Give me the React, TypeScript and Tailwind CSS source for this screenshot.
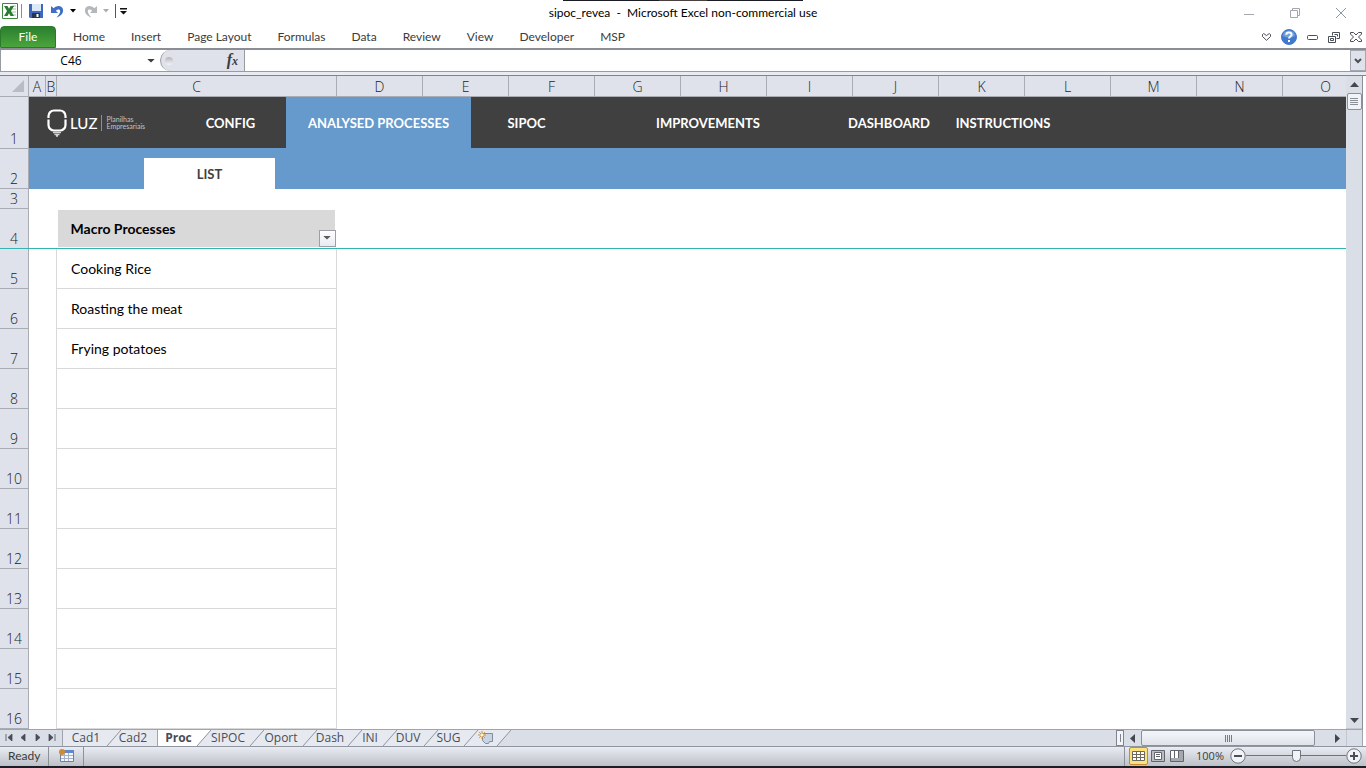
import React from 'react'
import clsx from 'clsx'

type Row = {
  readonly label: number
  readonly heightClassName: string
}

type SheetTab = {
  readonly name: string
  readonly widthClassName: string
}

type NavItem = {
  readonly label: string
  readonly widthClassName: string
}

const ribbonTabs: ReadonlyArray<string> = [
  'Home',
  'Insert',
  'Page Layout',
  'Formulas',
  'Data',
  'Review',
  'View',
  'Developer',
  'MSP',
]

const columns: ReadonlyArray<string> = 'DEFGHIJKLMNO'.split('')

const rows: ReadonlyArray<Row> = [
  { label: 1, heightClassName: 'h-[52px]' },
  { label: 2, heightClassName: 'h-10' },
  { label: 3, heightClassName: 'h-5' },
  ...[4, 5, 6, 7, 8, 9, 10, 11, 12, 13, 14, 15, 16].map(label => ({
    label,
    heightClassName: 'h-10',
  })),
]

const navItems: ReadonlyArray<NavItem> = [
  { label: 'CONFIG', widthClassName: 'w-[111px]' },
  { label: 'ANALYSED PROCESSES', widthClassName: 'w-[185px]' },
  { label: 'SIPOC', widthClassName: 'w-[111px]' },
  { label: 'IMPROVEMENTS', widthClassName: 'w-[252px]' },
  { label: 'DASHBOARD', widthClassName: 'w-[110px]' },
  { label: 'INSTRUCTIONS', widthClassName: 'w-[118px]' },
]

const processes: ReadonlyArray<string> = [
  'Cooking Rice',
  'Roasting the meat',
  'Frying potatoes',
  ...Array.from({ length: 9 }, () => ''),
]

const sheetTabs: ReadonlyArray<SheetTab> = [
  { name: 'Cad1', widthClassName: 'w-[51px]' },
  { name: 'Cad2', widthClassName: 'w-[43px]' },
  { name: 'Proc', widthClassName: 'w-[47px]' },
  { name: 'SIPOC', widthClassName: 'w-[53px]' },
  { name: 'Oport', widthClassName: 'w-[53px]' },
  { name: 'Dash', widthClassName: 'w-[45px]' },
  { name: 'INI', widthClassName: 'w-[35px]' },
  { name: 'DUV', widthClassName: 'w-[41px]' },
  { name: 'SUG', widthClassName: 'w-[40px]' },
]

const App = (): React.JSX.Element => (
  <div className="flex h-screen flex-col overflow-hidden bg-white font-['Open_Sans',sans-serif] text-xs text-[#3b3b3b]">
    <TitleBar />
    <Ribbon />
    <FormulaBar />
    <Sheet />
    <SheetTabs />
    <StatusBar />
  </div>
)

const TitleBar = (): React.JSX.Element => (
  <header className="grid h-[26px] shrink-0 grid-cols-[1fr_auto_1fr]">
    <div className="flex items-center pb-1 pl-0.5">
      <ExcelIcon />
      <span className="ml-[3px] h-3.5 w-px bg-[#8b8d91]" />
      <button type="button" aria-label="Save" className="ml-[7px]">
        <SaveIcon />
      </button>
      <button type="button" aria-label="Undo" className="ml-2 flex items-center gap-1.5">
        <UndoIcon className="text-[#3f6fc4]" />
        <Caret className="text-black" />
      </button>
      <button type="button" aria-label="Redo" className="ml-2 flex items-center gap-1.5">
        <UndoIcon className="-scale-x-100 text-[#b4b8bc]" />
        <Caret className="text-[#a9abad]" />
      </button>
      <span className="ml-1.5 h-3.5 w-px bg-[#55575a]" />
      <button type="button" aria-label="Customize toolbar" className="ml-1">
        <svg width="7" height="7" viewBox="0 0 7 7">
          <path d="M0 0h7v1.4H0zM0 3h7L3.5 6.5z" fill="#111" />
        </svg>
      </button>
    </div>
    <div className="flex flex-col items-center">
      <div className="flex h-px w-60 justify-center bg-[#1b1c26]">
        <span className="w-12 bg-[#49403f]" />
      </div>
      <h1 className="pt-1 font-[Lato,sans-serif] text-xs leading-4 whitespace-pre text-black">
        sipoc_revea  -  Microsoft Excel non-commercial use
      </h1>
    </div>
    <div className="flex items-center justify-end gap-9 pr-5 text-[#a3a7ad]">
      <button type="button" aria-label="Minimize">
        <svg width="10" height="12" viewBox="0 0 10 12" stroke="currentColor">
          <path d="M0 7.5h10" />
        </svg>
      </button>
      <button type="button" aria-label="Restore">
        <svg width="10" height="10" viewBox="0 0 10 10" fill="none" stroke="currentColor">
          <path d="M.5 2.5h7v7h-7zM2.5 2.5v-2h7v7h-2" />
        </svg>
      </button>
      <button type="button" aria-label="Close">
        <svg width="10" height="10" viewBox="0 0 10 10" fill="none" stroke="#8d97a3">
          <path d="M0 0l10 10M10 0L0 10" />
        </svg>
      </button>
    </div>
  </header>
)

const Ribbon = (): React.JSX.Element => (
  <nav className="flex h-6 shrink-0 items-stretch border-b-2 border-[#8a8e94] font-[Lato,sans-serif]">
    <button
      type="button"
      className="h-[22px] w-14 rounded-t border border-[#2b7a2b] bg-linear-to-b from-[#2b7f2e] to-[#4aa53c] text-xs leading-4 text-white"
    >
      File
    </button>
    <div className="ml-[17px] flex gap-[26px]">
      {ribbonTabs.map(tab => (
        <button key={tab} type="button" className="h-[22px] text-xs leading-4">
          {tab}
        </button>
      ))}
    </div>
    <div className="ml-auto flex h-[22px] items-center gap-2.5 pr-1 text-[#4a4e57]">
      <button type="button" aria-label="Collapse ribbon">
        <svg width="9" height="8" viewBox="0 0 9 8" fill="none" stroke="currentColor">
          <path d="M.5 1.5l1.2-1L4.5 2.6 7.3.5l1.2 1v2L4.5 7.3.5 3.5z" />
        </svg>
      </button>
      <button type="button" aria-label="Help">
        <svg width="16" height="16" viewBox="0 0 16 16">
          <circle cx="8" cy="8" r="7.5" fill="#4379cd" stroke="#4379cd" />
          <path d="M2 7a6 5.5 0 0 1 12 0q-6 3-12 0z" fill="#6fa2e0" />
          <path
            d="M5.3 5.8C5.3 2.8 10.6 2.8 10.6 5.8 10.6 7.6 8 7.6 8 9.6"
            fill="none"
            stroke="#fff"
            strokeWidth="1.9"
          />
          <path d="M7 11h2v2H7z" fill="#fff" />
        </svg>
      </button>
      <button type="button" aria-label="Minimize workbook">
        <svg width="11" height="5" viewBox="0 0 11 5" fill="none" stroke="currentColor">
          <rect x=".5" y=".5" width="10" height="4" rx="1" />
        </svg>
      </button>
      <button type="button" aria-label="Restore workbook">
        <svg width="12" height="11" viewBox="0 0 12 11" fill="none" stroke="currentColor">
          <path d="M4.5 3.5v-3h7v6h-3M.5 4.5h7v6h-7zM2.5 6.5h3v2h-3zM6.5 2.5h3v2" />
        </svg>
      </button>
      <button type="button" aria-label="Close workbook">
        <svg width="12" height="10" viewBox="0 0 12 10" fill="none" stroke="currentColor">
          <path d="M.5.5h3L6 3 8.5.5h3V2l-3 3 3 3v1.5h-3L6 7 3.5 9.5h-3V8l3-3-3-3z" />
        </svg>
      </button>
    </div>
  </nav>
)

const FormulaBar = (): React.JSX.Element => (
  <div className="flex h-[26px] shrink-0 flex-col border-b border-[#80848c] bg-[#e8ebf1]">
    <div className="flex h-[22px] border-b border-[#979ca3] bg-white">
      <input
        aria-label="Name Box"
        defaultValue="C46"
        className="w-[141px] border-l border-[#979ca3] text-center text-xs leading-4 text-black outline-none"
      />
      <button type="button" aria-label="Named cells" className="flex w-[19px] items-center justify-center">
        <Caret className="scale-x-125 text-[#3d3f44]" />
      </button>
      <div className="flex w-[85px] items-center justify-between rounded-l-full border-r border-l border-[#979ca3] bg-[#dfe2ea] pr-1.5 pl-1">
        <span className="h-2 w-2 rounded-full bg-linear-to-b from-[#b3b6bd] to-[#f4f5f8]" />
        <button
          type="button"
          aria-label="Insert Function"
          className="font-['Liberation_Serif',serif] text-base leading-4 font-bold text-[#3a3d42] italic"
        >
          f<span className="text-xs">x</span>
        </button>
      </div>
      <input aria-label="Formula" className="min-w-0 flex-1 px-1 outline-none" />
      <button
        type="button"
        aria-label="Expand formula bar"
        className="flex w-4 items-center justify-center border border-[#a4a8b0] bg-[#dfe2ea]"
      >
        <svg width="8" height="6" viewBox="0 0 8 6" fill="none" stroke="#4b4e55" strokeWidth="2">
          <path d="M1 1l3 3 3-3" />
        </svg>
      </button>
    </div>
  </div>
)

const Sheet = (): React.JSX.Element => (
  <div className="flex min-h-0 flex-1">
    <div className="flex min-w-0 flex-1 flex-col">
      <ColumnHeaders />
      <div className="relative flex min-h-0 flex-1 overflow-hidden">
        <RowHeaders />
        <main className="min-w-0 flex-1 overflow-hidden font-[Lato,sans-serif]">
          <Banner />
          <ProcessTable />
        </main>
        {/* frozen panes limit */}
        <div className="absolute inset-x-0 top-[151px] h-px bg-[#35b3b1]" />
      </div>
    </div>
    <VerticalScrollbar />
  </div>
)

const ColumnHeaders = (): React.JSX.Element => (
  <div className="flex h-[21px] shrink-0 overflow-hidden border-b border-[#a9acb3] bg-[#dfe2ea] text-sm leading-[22px] font-light text-[#202226]">
    <button
      type="button"
      aria-label="Select all"
      className="flex w-[29px] shrink-0 items-end justify-end border-r border-[#a9acb3] pr-1 pb-1"
    >
      <svg width="12" height="12" viewBox="0 0 12 12">
        <path d="M12 0v12H0z" fill="#b9bcc3" />
      </svg>
    </button>
    <div className="w-[17px] shrink-0 border-r border-[#a9acb3] text-center">A</div>
    <div className="w-[11px] shrink-0 border-r border-[#a9acb3] text-center">B</div>
    <div className="w-[280px] shrink-0 border-r border-[#a9acb3] text-center">C</div>
    {columns.map(column => (
      <div key={column} className="w-[86px] shrink-0 border-r border-[#a9acb3] text-center">
        {column}
      </div>
    ))}
  </div>
)

const RowHeaders = (): React.JSX.Element => (
  <div className="w-[29px] shrink-0 border-r border-[#a9acb3] bg-[#dfe2ea] text-sm leading-[18px] font-light text-[#202226]">
    {rows.map(({ label, heightClassName }) => (
      <div
        key={label}
        className={clsx('flex items-end justify-center border-b border-[#a9acb3]', heightClassName)}
      >
        {label}
      </div>
    ))}
  </div>
)

const Banner = (): React.JSX.Element => (
  <>
    <nav className="flex h-[51px] bg-[#404040]">
      <div className="flex w-[146px] shrink-0 items-center pl-[18px]">
        <Logo />
      </div>
      {navItems.map(({ label, widthClassName }) => (
        <a
          key={label}
          href="#"
          className={clsx(
            'flex shrink-0 items-center justify-center pt-0.5 text-[13px] font-bold whitespace-nowrap text-white',
            widthClassName,
            label === 'ANALYSED PROCESSES' && 'bg-[#6699cc]',
          )}
        >
          {label}
        </a>
      ))}
    </nav>
    <div className="flex h-[41px] items-end bg-[#6699cc] pl-[115px]">
      <a
        href="#"
        className="flex h-[31px] w-[131px] items-center justify-center bg-white pt-0.5 text-[13px] font-bold text-[#404040]"
      >
        LIST
      </a>
    </div>
  </>
)

const Logo = (): React.JSX.Element => (
  <div className="flex items-center text-white">
    <svg width="20" height="28" viewBox="0 0 20 28" fill="none" stroke="currentColor">
      <path d="M1.5 9V7A5.5 5.5 0 0 1 7 1.5h6A5.5 5.5 0 0 1 18.5 7v2" strokeWidth="2.2" />
      <path d="M1.5 10.5V16A5.5 5.5 0 0 0 7 21.5h6a5.5 5.5 0 0 0 5.5-5.5v-5.5" strokeWidth="2.2" />
      <path d="M6 23.5h8M7.5 25.5h5M9 27h2" stroke="#d4d4d4" strokeWidth="1.6" />
    </svg>
    <span className="ml-[3px] text-[15px] leading-5 font-medium">LUZ</span>
    <span className="ml-1 h-4 w-px bg-[#8f8f8f]" />
    <span className="ml-1 text-[7px] leading-[7px] text-[#c4c4c4]">
      Planilhas
      <br />
      Empresariais
    </span>
  </div>
)

const ProcessTable = (): React.JSX.Element => (
  <table className="mt-5 ml-[27px] w-[281px] table-fixed border-collapse text-sm text-black">
    <thead>
      <tr className="h-[39px]">
        <th className="p-0">
          <div className="mr-0.5 ml-px flex h-[37px] items-center justify-between bg-[#d9d9d9] pl-[13px] text-sm font-bold">
            <span className="pt-0.5">Macro Processes</span>
            <button
              type="button"
              aria-label="Filter Macro Processes"
              className="-mr-px flex h-[17px] w-[17px] items-center justify-center self-end border border-[#9b9fa8] bg-linear-to-b from-white to-[#e8ebf2]"
            >
              <Caret className="scale-x-125 text-[#5a5c60]" />
            </button>
          </div>
        </th>
      </tr>
    </thead>
    <tbody>
      {processes.map((process, i) => (
        <tr key={i} className="h-10">
          <td className="border border-[#d9d9d9] pt-0.5 pr-0 pb-0 pl-3.5">{process}</td>
        </tr>
      ))}
    </tbody>
  </table>
)

const VerticalScrollbar = (): React.JSX.Element => (
  <div className="mr-[3px] flex w-[17px] shrink-0 flex-col items-center border-r border-[#8a8e96] bg-[#dadee6]">
    <button type="button" aria-label="Scroll up" className="flex h-[17px] items-center">
      <svg width="9" height="5" viewBox="0 0 9 5">
        <path d="M4.5 0L9 5H0z" fill="#44474d" />
      </svg>
    </button>
    <div className="flex h-[17px] w-[15px] flex-col items-center justify-center gap-px rounded-xs border border-[#8b8f98] bg-[#f1f3f7]">
      <span className="h-px w-2 bg-[#8b8f98]" />
      <span className="h-px w-2 bg-[#8b8f98]" />
      <span className="h-px w-2 bg-[#8b8f98]" />
      <span className="h-px w-2 bg-[#8b8f98]" />
    </div>
    <button
      type="button"
      aria-label="Scroll down"
      className="mt-auto flex h-[17px] w-full items-center justify-center border-b border-[#c2c6ce]"
    >
      <svg width="9" height="5" viewBox="0 0 9 5">
        <path d="M0 0h9L4.5 5z" fill="#44474d" />
      </svg>
    </button>
  </div>
)

const SheetTabs = (): React.JSX.Element => (
  <div className="mr-[3px] flex h-[17px] shrink-0 border-t border-r border-[#a0a4ac] bg-[#dadfe7] text-[#494d58]">
    <div className="flex w-[62px] shrink-0 items-center justify-between pr-1.5 pb-0.5 pl-[5px]">
      <SheetArrow label="First sheet" path="M1 0v7M7 0v7L3 3.5z" />
      <SheetArrow label="Previous sheet" path="M6 0v7L2 3.5z" />
      <SheetArrow label="Next sheet" path="M2 0v7l4-3.5z" />
      <SheetArrow label="Last sheet" path="M7 0v7M1 0v7l4-3.5z" />
    </div>
    <div className="flex border-l border-[#a0a4ac]">
      {sheetTabs.map(({ name, widthClassName }) => {
        const isActive = name === 'Proc'
        return (
          <React.Fragment key={name}>
            <button
              type="button"
              className={clsx(
                'flex shrink-0 justify-center pr-[5px] text-xs leading-4',
                widthClassName,
                isActive ? 'border-l border-[#a0a4ac] bg-white font-bold' : 'bg-[#e6e9f0]',
              )}
            >
              <span className="relative z-20">{name}</span>
            </button>
            {name !== 'Cad2' && <TabEdge leftFill={isActive ? '#fff' : '#e6e9f0'} rightFill="#e6e9f0" />}
          </React.Fragment>
        )
      })}
      <button
        type="button"
        aria-label="Insert worksheet"
        className="flex w-[33px] shrink-0 items-center justify-center bg-[#e6e9f0] pr-1 pb-0.5"
      >
        <svg width="15" height="13" viewBox="0 0 15 13">
          <path d="M4.5 2.5h10v8h-3l-1 2h-3l-3-3z" fill="#c9d3e2" stroke="#7f8ba0" />
          <path d="M4 0v8M0 4h8M1.2 1.2l5.6 5.6M6.8 1.2L1.2 6.8" stroke="#d6902c" />
          <circle cx="4" cy="4" r="1.5" fill="#fff2c4" />
        </svg>
      </button>
      <TabEdge leftFill="#e6e9f0" rightFill="#dadfe7" />
    </div>
    <HorizontalScrollbar />
  </div>
)

type SheetArrowProps = {
  readonly label: string
  readonly path: string
}

const SheetArrow = ({ label, path }: SheetArrowProps): React.JSX.Element => (
  <button type="button" aria-label={label}>
    <svg width="8" height="7" viewBox="0 0 8 7" fill="currentColor" stroke="currentColor" strokeWidth=".8">
      <path d={path} />
    </svg>
  </button>
)

type TabEdgeProps = {
  readonly leftFill: string
  readonly rightFill: string
}

const TabEdge = ({ leftFill, rightFill }: TabEdgeProps): React.JSX.Element => (
  <svg width="14" height="16" viewBox="0 0 14 16" className="z-10 -mx-[7px] shrink-0">
    <path d="M0 0h14L0 16z" fill={leftFill} />
    <path d="M14 0v16H0z" fill={rightFill} />
    <path d="M14 0L0 16" stroke="#8f949d" />
  </svg>
)

const HorizontalScrollbar = (): React.JSX.Element => (
  <div className="ml-auto flex shrink-0">
    <span className="flex w-2 items-center justify-center border border-[#80848c] bg-[#f4f5f8]">
      <span className="h-2 w-px bg-[#80848c]" />
    </span>
    <button type="button" aria-label="Scroll left" className="flex w-[17px] items-center justify-center">
      <svg width="5" height="9" viewBox="0 0 5 9">
        <path d="M5 0v9L0 4.5z" fill="#44474d" />
      </svg>
    </button>
    <div className="flex w-[174px] items-center justify-center gap-px rounded-xs border border-[#8b8f98] bg-linear-to-b from-[#f4f6f9] to-[#dfe3ea]">
      <span className="h-[7px] w-px bg-[#777b84]" />
      <span className="h-[7px] w-px bg-[#777b84]" />
      <span className="h-[7px] w-px bg-[#777b84]" />
      <span className="h-[7px] w-px bg-[#777b84]" />
    </div>
    <button type="button" aria-label="Scroll right" className="ml-[14px] flex w-[17px] items-center justify-center">
      <svg width="5" height="9" viewBox="0 0 5 9">
        <path d="M0 0v9l5-4.5z" fill="#44474d" />
      </svg>
    </button>
    <span className="w-4 border-l border-[#c2c6ce]" />
  </div>
)

const StatusBar = (): React.JSX.Element => (
  <footer className="flex h-[22px] shrink-0 items-stretch border-t border-b-2 border-t-[#9096a0] border-b-[#1b1e27] bg-linear-to-b from-[#e9ecf2] to-[#bdc2c8]">
    <span className="w-12 pl-2 font-[Lato,sans-serif] text-xs leading-[18px]">Ready</span>
    <div className="flex w-9 items-center justify-center border-x border-[#8d9198] pb-0.5">
      <svg width="15" height="13" viewBox="0 0 15 13">
        <path d="M1.5 1.5h13v11h-13z" fill="#f3f6fb" stroke="#71809c" />
        <path d="M5 1h10v3H5z" fill="#5f88cd" />
        <path d="M2 6.5h12M2 9.5h12M5.5 4v8M9.5 4v8" stroke="#a5b2c8" />
        <circle cx="3" cy="3" r="3" fill="#cf8a35" />
      </svg>
    </div>
    <div className="ml-auto flex items-center border-l border-[#8d9198] pb-0.5 pl-1">
      <button
        type="button"
        aria-label="Normal view"
        className="flex h-[18px] w-[19px] items-center justify-center rounded-xs border border-[#c58a3c] bg-[#fde27c]"
      >
        <svg width="13" height="10" viewBox="0 0 13 10" fill="#fff" stroke="#6d6a5c">
          <path d="M.5.5h12v9H.5zM.5 3.5h12M.5 6.5h12M4.5.5v9M8.5.5v9" />
        </svg>
      </button>
      <button type="button" aria-label="Page layout view" className="ml-[3px]">
        <svg width="14" height="12" viewBox="0 0 14 12" fill="#b9bcc2" stroke="#62656b">
          <path d="M.5.5h13v11H.5z" />
          <path d="M3.5 2.5h7v7h-7z" fill="#fff" />
          <path d="M5 4.5h4M5 6.5h4" />
        </svg>
      </button>
      <button type="button" aria-label="Page break preview" className="ml-[5px]">
        <svg width="14" height="12" viewBox="0 0 14 12" fill="#a5a8ae" stroke="#62656b">
          <path d="M.5.5h13v11H.5z" />
          <path d="M1 1h3v7H1zM5 1h3v7H5z" fill="#fff" stroke="none" />
          <path d="M4.5 1v7M8.5 1v7" />
        </svg>
      </button>
      <button type="button" className="ml-3 text-[11px] leading-4">
        100%
      </button>
      <button type="button" aria-label="Zoom out" className="ml-1.5">
        <ZoomGlyph path="M4 8h8" />
      </button>
      <input
        type="range"
        aria-label="Zoom"
        min={0}
        max={100}
        defaultValue={50}
        className="h-4 w-[100px] appearance-none bg-[linear-gradient(#6f737a,#6f737a)] bg-[length:100%_1px] bg-center bg-no-repeat [&::-webkit-slider-thumb]:h-3 [&::-webkit-slider-thumb]:w-[9px] [&::-webkit-slider-thumb]:appearance-none [&::-webkit-slider-thumb]:rounded-b-full [&::-webkit-slider-thumb]:border [&::-webkit-slider-thumb]:border-[#6f737a] [&::-webkit-slider-thumb]:bg-[#f2f3f6]"
      />
      <button type="button" aria-label="Zoom in" className="mr-1">
        <ZoomGlyph path="M4 8h8M8 4v8" />
      </button>
    </div>
  </footer>
)

type ZoomGlyphProps = {
  readonly path: string
}

const ZoomGlyph = ({ path }: ZoomGlyphProps): React.JSX.Element => (
  <svg width="16" height="16" viewBox="0 0 16 16" fill="none">
    <circle cx="8" cy="8" r="7.2" fill="#f2f3f6" stroke="#6f737a" />
    <path d={path} stroke="#4c4f55" strokeWidth="2" />
  </svg>
)

type IconProps = {
  readonly className?: string
}

const Caret = ({ className }: IconProps): React.JSX.Element => (
  <svg width="6" height="4" viewBox="0 0 6 4" className={className}>
    <path d="M0 0h6L3 3.5z" fill="currentColor" />
  </svg>
)

const UndoIcon = ({ className }: IconProps): React.JSX.Element => (
  <svg width="13" height="13" viewBox="0 0 13 13" className={className}>
    <path
      d="M0 1v7h7L4.8 5.8C7.5 3.2 9.8 4.5 9 7.2 8.5 9 7.5 10.2 5.5 12.5 10 11 12.5 8 12 4.5 11.4.8 6.5-.6 2.6 3.3z"
      fill="currentColor"
    />
  </svg>
)

const SaveIcon = (): React.JSX.Element => (
  <svg width="14" height="14" viewBox="0 0 14 14">
    <path d="M0 0h14v14H1l-1-1z" fill="#3d68bd" />
    <path d="M3 0h9v7H3z" fill="#dbe8f8" />
    <path d="M3 9h8v5H3z" fill="#28354f" />
    <path d="M7.5 10h2v3h-2z" fill="#fff" />
  </svg>
)

const ExcelIcon = (): React.JSX.Element => (
  <svg width="16" height="16" viewBox="0 0 16 16">
    <path d="M.5.5h15v15H.5z" fill="#fff" stroke="#3c8a3e" />
    <path d="M10 3h4M10 6h4M10 9h4M10 12h4" stroke="#9dc59a" />
    <path d="M2 3h3.5L7 5.8 8.5 3H12L9 8l3 5H8.5L7 10.2 5.5 13H2l3-5z" fill="#2c7a31" />
  </svg>
)

export default App
